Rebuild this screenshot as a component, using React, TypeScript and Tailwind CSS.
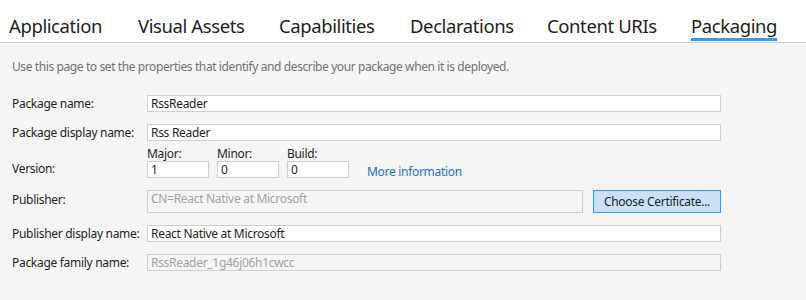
import React from 'react';

// tab column widths taken from where each tab starts
const tabs: [string, string][] = [
  ['Application', 'w-[129px]'],
  ['Visual Assets', 'w-[141px]'],
  ['Capabilities', 'w-[131px]'],
  ['Declarations', 'w-[137px]'],
  ['Content URIs', 'w-[144px]'],
  ['Packaging', 'w-[90px]'],
];

const Field: React.FC<{ value: string; disabled?: boolean; className?: string }> = ({ value, disabled, className }) => (
  <div
    className={`h-[17px] border border-[#cccedb] px-[3px] text-[12px] leading-[15px] tracking-[-0.3px] whitespace-nowrap overflow-hidden ${
      disabled ? 'bg-[#f5f5f5] text-[#a2a2a2]' : 'bg-white text-[#1e1e1e]'
    } ${className ?? ''}`}
  >
    {value}
  </div>
);

const Label: React.FC<{ children: React.ReactNode }> = ({ children }) => (
  <div className="w-[135px] shrink-0 text-[12px] leading-[17px] tracking-[-0.3px] text-[#1e1e1e] whitespace-nowrap">
    {children}
  </div>
);

export default function App() {
  return (
    <div className="w-[806px] h-[300px] bg-[#f5f5f5] font-['Noto_Sans',sans-serif] overflow-hidden">
      <div className="h-[43px] bg-white border-b border-[#cccedb] flex pl-[9px]">
        {tabs.map(([t, w]) => (
          <div key={t} className={`${w} shrink-0 h-full flex items-end`}>
            <div className="relative h-full flex items-end pb-[7px] text-[18.5px] leading-none tracking-[-0.4px] text-[#1e1e1e] whitespace-nowrap">
              {t}
              {t === 'Packaging' && <div className="absolute left-0 right-0 bottom-[1px] h-[3px] bg-[#3399ff]" />}
            </div>
          </div>
        ))}
      </div>

      <div className="pl-[12px]">
        <div className="mt-[17px] text-[12px] leading-[14px] tracking-[-0.4px] text-[#717171]">
          Use this page to set the properties that identify and describe your package when it is deployed.
        </div>

        <div className="mt-[21px] flex">
          <Label>Package name:</Label>
          <Field value="RssReader" className="w-[574px]" />
        </div>

        <div className="mt-[12px] flex">
          <Label>Package display name:</Label>
          <Field value="Rss Reader" className="w-[574px]" />
        </div>

        <div className="mt-[5px] flex items-end">
          <div className="w-[135px] shrink-0 text-[12px] leading-[17px] tracking-[-0.3px] text-[#1e1e1e] pb-[1px]">Version:</div>
          <div className="flex gap-[8px]">
            {[
              ['Major:', '1'],
              ['Minor:', '0'],
              ['Build:', '0'],
            ].map(([l, v]) => (
              <div key={l} className="flex flex-col">
                <div className="text-[12px] leading-[15px] tracking-[-0.3px] text-[#1e1e1e]">{l}</div>
                <Field value={v} className="w-[62px]" />
              </div>
            ))}
          </div>
          <div className="ml-[18px] text-[12px] leading-[15px] tracking-[-0.3px] text-[#1e72c6] mb-[-1px]">More information</div>
        </div>

        <div className="mt-[12px] flex">
          <Label>
            <div className="pt-[1px]">Publisher:</div>
          </Label>
          <Field value="CN=React Native at Microsoft" disabled className="w-[436px] !h-[23px]" />
          <div className="ml-[10px] w-[128px] h-[23px] bg-[#c9e0f7] border border-[#3399ff] text-[12px] tracking-[-0.3px] text-[#1e1e1e] flex items-center justify-center">
            Choose Certificate...
          </div>
        </div>

        <div className="mt-[12px] flex">
          <Label>Publisher display name:</Label>
          <Field value="React Native at Microsoft" className="w-[574px]" />
        </div>

        <div className="mt-[12px] flex">
          <Label>Package family name:</Label>
          <Field value="RssReader_1g46j06h1cwcc" disabled className="w-[574px]" />
        </div>
      </div>
    </div>
  );
}
